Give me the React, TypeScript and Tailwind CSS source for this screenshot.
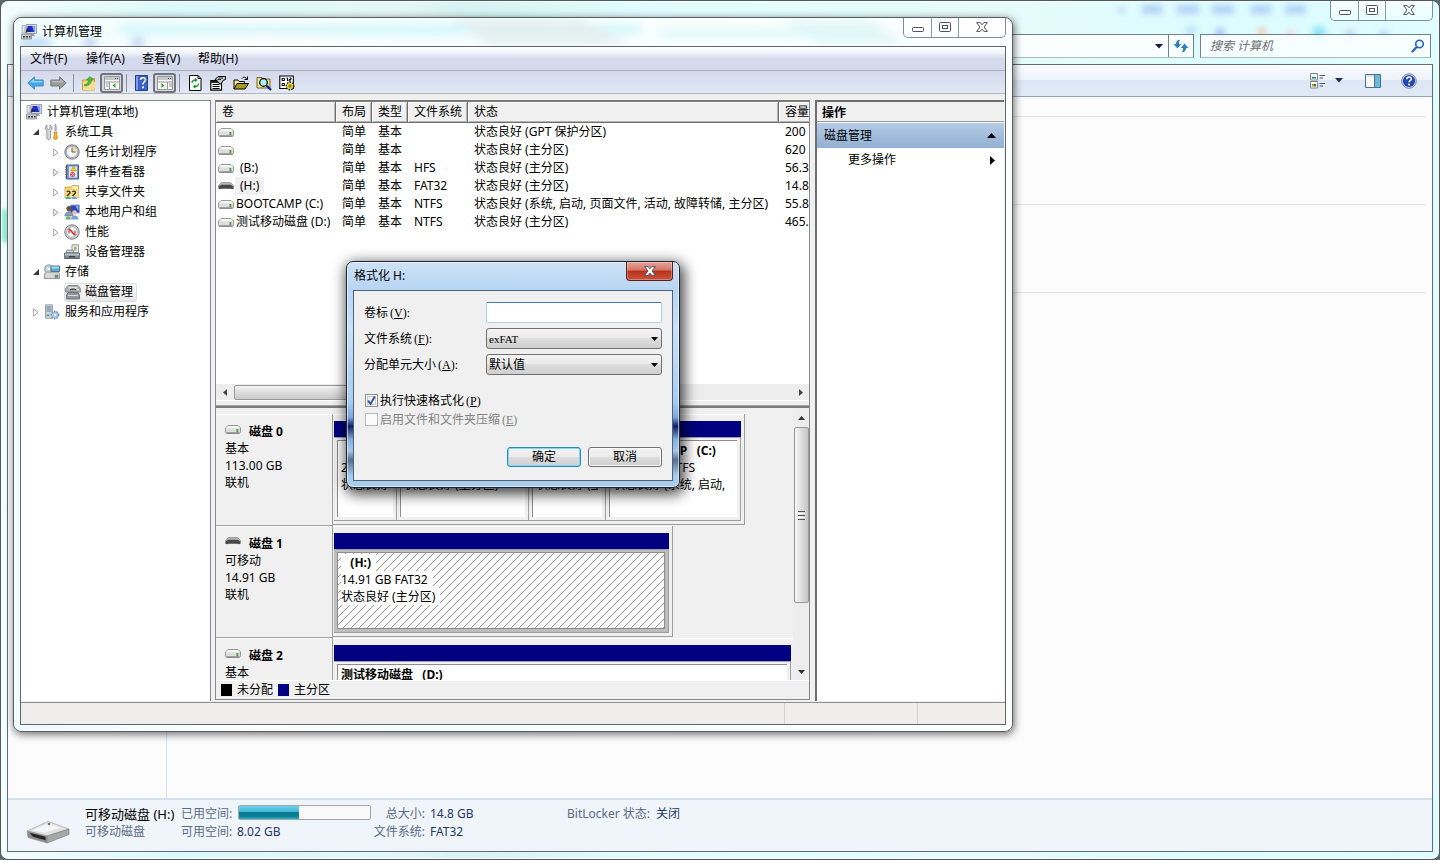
import React from "react";

const UI = "font-['Noto_Sans','Noto_Sans_CJK_SC',sans-serif]";
const SERIF = "font-['Liberation_Serif','Noto_Sans_CJK_SC',serif]";

/* ---------- icons ---------- */

type IconProps = { className?: string };

const Svg = ({ children, className = "size-4", box = "0 0 16 16" }: { children: React.ReactNode; className?: string; box?: string }) => (
  <svg viewBox={box} className={`shrink-0 ${className}`} aria-hidden="true">
    {children}
  </svg>
);

const ComputerIcon = () => (
  <Svg>
    <path d="M5 .5h10.500v9H5z" fill="#d3d6de" stroke="#9aa0b0" />
    <path d="M6.500 2h7.500v6H6.500z" fill="#1c2fc4" />
    <path d="M11 2h3v6h-1z" fill="#7f9cf0" />
    <path d="M8 10h5l1 2H8z" fill="#9a9ea8" />
    <path d="M1 1.500h3V9H1z" fill="#e4e6ea" stroke="#9a9ea6" strokeWidth=".7" />
    <path d="M6 3.500l1.500 2.500 2 1-2.500.5L4.500 9z" fill="#1b2250" />
    <path d="M0.500 10h10v5h-10z" fill="#c6c9ce" stroke="#85888e" strokeWidth=".8" />
    <path d="M2 12h2v1.500H2zM5 12h2v1.500H5zM8 12h1.500v1.500H8z" fill="#3b3e44" />
  </Svg>
);

const ToolsIcon = () => (
  <Svg>
    <path d="M3 1v3.500l1.500 1L6 4.500V1c1.500.8 2 2 2 3.200 0 1.300-.8 2.100-1.600 2.600v7.200c0 2-3.500 2-3.500 0V6.800C2 6.300 1.200 5.500 1.200 4.200 1.200 3 1.800 1.800 3 1z" fill="#d8dade" stroke="#80858d" strokeWidth=".8" />
    <path d="M11 .5l1 .0.4 6h-1.600z" fill="#c3c6cb" stroke="#84888f" strokeWidth=".6" />
    <path d="M9.800 8h3.400l-.7 1.500.9 4.500c0 1.800-3.800 1.800-3.800 0l.9-4.500z" fill="#f3b52a" stroke="#b57c10" strokeWidth=".7" />
  </Svg>
);

const ClockIcon = () => (
  <Svg>
    <circle cx="8" cy="8" r="7.200" fill="#b9bdc4" stroke="#6f747d" strokeWidth=".9" />
    <circle cx="8" cy="8" r="5.600" fill="#f3f6fb" stroke="#8b9099" strokeWidth=".6" />
    <path d="M8 8V2.800a5.200 5.200 0 015.200 5.200z" fill="#f7d9a0" />
    <path d="M8 3.800V8h3.600" fill="none" stroke="#5c626c" strokeWidth="1" />
  </Svg>
);

const EventIcon = () => (
  <Svg>
    <path d="M2.500 1h12v14h-12z" fill="#7f9ad1" stroke="#3d5a9c" />
    <path d="M5 2.500h8v11H5z" fill="#dfe7f7" />
    <path d="M9.500 2l2.800 5H6.700z" fill="#f5c518" stroke="#b58a00" strokeWidth=".5" />
    <circle cx="8.500" cy="10.500" r="2.500" fill="#e0524c" />
    <path d="M7.500 9.500l2 2m0-2l-2 2" stroke="#fff" strokeWidth=".8" />
    <path d="M1 3h3M1 5.500h3M1 8h3M1 10.500h3M1 13h3" stroke="#5c626d" strokeWidth=".9" />
  </Svg>
);

const SharedFolderIcon = () => (
  <Svg>
    <path d="M1 3h6l1-1.500h6.500v12H1z" fill="#f1cf6b" stroke="#c9a54c" strokeWidth=".8" />
    <path d="M8.500 2.500h5V5h-5z" fill="#fdf3cf" />
    <path d="M1.500 5.500h13v8h-13z" fill="#f9de8c" />
    <path d="M3 8c.5-1.200 3-1.200 3 .5S3.500 10.500 3.200 12M8.500 8c.5-1.200 3-1.200 3 .5S9 10.500 8.700 12" fill="none" stroke="#4b3a2a" strokeWidth="1.500" />
    <path d="M1.500 15c.5-3.500 5-3.500 5.500 0z" fill="#42b29c" />
    <path d="M7.500 15c.5-3.500 5-3.500 5.500 0z" fill="#5da9dd" />
  </Svg>
);

const UsersIcon = () => (
  <Svg>
    <path d="M6.500 1h9v8h-9z" fill="#2a49c9" stroke="#a5aab8" />
    <path d="M11.500 2h3v5z" fill="#8fb0f5" />
    <circle cx="5" cy="4.500" r="2.600" fill="#6f5138" />
    <path d="M.8 12c0-6 8.400-6 8.400 0z" fill="#8b9cba" stroke="#56688a" strokeWidth=".5" />
    <circle cx="10.500" cy="8.500" r="2.200" fill="#e8c39c" />
    <path d="M7 15.500c0-5.500 7.500-5.500 7.500 0z" fill="#7b9fd4" />
    <path d="M1.500 15.500c0-4.500 5.500-4.500 5.500 0z" fill="#69b56a" />
  </Svg>
);

const PerfIcon = () => (
  <Svg>
    <circle cx="8" cy="8" r="7.200" fill="#d5d7db" stroke="#6a6d73" strokeWidth=".9" />
    <circle cx="8" cy="8" r="5.300" fill="#fff" stroke="#8e9197" strokeWidth=".7" />
    <path d="M5 4.800l6 6.400" stroke="#d1252b" strokeWidth="1.600" />
    <path d="M5 9.500V5M11 11V6.500" stroke="#d1252b" strokeWidth="1.100" />
  </Svg>
);

const DeviceIcon = () => (
  <Svg>
    <path d="M8 .8h6.500v8H8z" fill="#eef0f2" stroke="#7d8289" strokeWidth=".8" />
    <path d="M10 2.500h2.500v4H10z" fill="#a8b36d" />
    <path d="M3 6h6l1 3H2z" fill="#c7cbd1" stroke="#777c84" strokeWidth=".7" />
    <path d="M.6 9h14.800v5.500H.6z" fill="#7f8b95" stroke="#4b545c" strokeWidth=".8" />
    <path d="M1 9.500h14v2H1z" fill="#b3bec7" />
    <path d="M5 12h6v1.500H5z" fill="#384048" />
  </Svg>
);

const StorageIcon = () => (
  <Svg>
    <circle cx="4.800" cy="5" r="4.200" fill="#c7d2da" stroke="#7a868f" strokeWidth=".8" />
    <circle cx="4.800" cy="5" r="1.300" fill="#f7f9fa" />
    <path d="M7 2h8.500v5.500H7z" fill="#49b2dd" stroke="#55626b" strokeWidth=".9" />
    <path d="M7.500 2.500h7.500v2h-7.500z" fill="#9adcf2" />
    <path d="M.6 9.500l2-1.500h11.500l1.400 1.500v5H.6z" fill="#d6d9dc" stroke="#7c8186" strokeWidth=".8" />
    <path d="M11 11h3v2.500h-3z" fill="#5fb04e" stroke="#666b70" strokeWidth=".5" />
  </Svg>
);

const DiskMgmtIcon = () => (
  <Svg>
    <path d="M3 1.500h10l2.400 3V8H.6V4.500z" fill="#a9adb1" stroke="#7b7f83" strokeWidth=".8" />
    <path d="M4 3h8l1 1.500H3z" fill="#e4e6e8" />
    <path d="M5 6c1-1.200 5-1.200 6 0" stroke="#202224" fill="none" />
    <path d="M3 8.500h10l1.500 2.500V15H1.500v-4z" fill="#92969a" stroke="#606468" strokeWidth=".8" />
    <path d="M3 11h10v1H3z" fill="#d9dbdd" />
    <path d="M12 5h2v1.500h-2z" fill="#cfe3a0" />
  </Svg>
);

const ServicesIcon = () => (
  <Svg>
    <path d="M1.500.8h7v13.500h-7z" fill="#cfd6dd" stroke="#87919b" strokeWidth=".8" />
    <path d="M2.500 3h5M2.500 5h5M2.500 7h5" stroke="#5e7c98" />
    <path d="M2.500 10.500h3v1.500h-3z" fill="#57a05a" />
    <circle cx="11" cy="11" r="3.500" fill="#9dbde0" stroke="#6f94bf" strokeWidth="1.800" strokeDasharray="1.500 1" />
    <circle cx="11" cy="11" r="2.800" fill="#a9c7e8" />
    <circle cx="11" cy="11" r="1.100" fill="#fff" />
  </Svg>
);

const DriveIcon = ({ className = "w-4 h-[9px]" }: IconProps) => (
  <Svg box="0 0 16 9" className={className}>
    <path d="M3 .5h10l2.500 2.500v4l-1 1.500h-13L.5 7V3z" fill="#dedede" stroke="#858585" strokeWidth=".8" />
    <path d="M3.200 1h9.600L15 3.200H1z" fill="#f8f8f8" />
    <path d="M1.500 7.800h13" stroke="#6c6c6c" strokeWidth=".8" />
    <path d="M11.500 4h1.800v3h-1.800z" fill="#4f9a3f" />
  </Svg>
);

const RemovableIcon = ({ className = "w-4 h-[9px]" }: IconProps) => (
  <Svg box="0 0 16 9" className={className}>
    <path d="M3.500 .5h9l3 3v3H.5v-3z" fill="#b4b4b4" stroke="#8a8a8a" strokeWidth=".7" />
    <path d="M.8 4.200l2.700-1.400h9l2.700 1.400v2.600l-1.500.4-1.200-.7h-9l-1.200.7-1.500-.4z" fill="#484848" />
  </Svg>
);

const ArrowIcon = ({ back }: { back?: boolean }) => (
  <Svg box="0 0 17 14" className="h-[14px] w-[17px]">
    {back ? (
      <path d="M.8 7L7.500.8V4h8.700v6H7.500v3.200z" fill="#3fa9ea" stroke="#4a8fc0" />
    ) : (
      <path d="M16.200 7L9.500.8V4H.8v6h8.700v3.200z" fill="#9a9a9a" stroke="#7d7d7d" />
    )}
    {back ? <path d="M3 6.500L7 2.800V5h8v1.500z" fill="#93d6fa" /> : <path d="M2 5h8V2.800l4 3.700H2z" fill="#b9b9b9" />}
  </Svg>
);

const UpFolderIcon = () => (
  <Svg>
    <path d="M1.500 5h5l1-1.500h6V15h-12z" fill="#f0ce74" stroke="#c39c45" />
    <path d="M2 7h12.500l-1 8H2z" fill="#f9df93" />
    <path d="M3.500 9.500c3-.5 4-2 4-4.500H5.500L9 1.500 12.500 5h-2c0 3.500-2.500 6-7 6z" fill="#4fbe3c" stroke="#2d8b22" strokeWidth=".6" />
  </Svg>
);

const PaneIcon = ({ right }: { right?: boolean }) => (
  <Svg>
    <path d="M.5 1.500h15v13H.5z" fill="#f7f7f7" stroke="#9b9b9b" />
    <path d="M1 2h14v3H1z" fill="#c7c7c7" />
    <path d="M11 3.500h1M13 3.500h1" stroke="#555" />
    <path d="M1 7h14" stroke="#9a9a9a" />
    {right ? (
      <path d="M4.500 8v5l3-2.500z" fill="#36a336" />
    ) : (
      <path d="M11.500 8v5l-3-2.500z" fill="#36a336" />
    )}
    <path d={right ? "M10.500 7v7M12 9h3M12 11h3" : "M5.500 7v7M2 9h2.500M2 11h2.500"} stroke="#9a9a9a" />
  </Svg>
);

const HelpBookIcon = () => (
  <Svg>
    <path d="M1.500.5h12v15h-12z" fill="#3a62c8" stroke="#24418f" />
    <path d="M2 1h2v14H2z" fill="#7f9ee6" />
    <path d="M6.500 5c0-3 5-3 5-.2 0 2-2.500 2-2.500 4.700" fill="none" stroke="#fff" strokeWidth="1.500" />
    <circle cx="9" cy="12.300" r="1.100" fill="#fff" />
  </Svg>
);

const RefreshPageIcon = () => (
  <Svg>
    <path d="M2.500.5h8.500l3 3v12H2.500z" fill="#fff" stroke="#000" />
    <path d="M11 .5v3h3" fill="none" stroke="#000" />
    <path d="M5 8c0-2.500 2-3 3.500-3M11.500 8.500c0 2.500-2 3-3.500 3" stroke="#1a9c2d" strokeWidth="1.300" fill="none" />
    <path d="M8 2.800L10.800 5 8 7.200zM8.500 9.300L5.700 11.500l2.800 2.200z" fill="#1a9c2d" />
  </Svg>
);

const PropertiesIcon = () => (
  <Svg>
    <path d="M.8 5.500h10.700v9.700H.8z" fill="#fff" stroke="#000" strokeWidth="1.200" />
    <path d="M1 6h8v2H1z" fill="#222" />
    <path d="M2.500 9.500h7M2.500 11.500h7M2.500 13.500h7" stroke="#000" />
    <path d="M5 4.500L8 1.500h7.500v3L13 5.500 11 9 8.500 8 7 5.500z" fill="#c9c9c9" stroke="#000" />
    <path d="M7.500 4.500H11M8.500 3H13" stroke="#000" strokeWidth=".8" />
  </Svg>
);

const OpenFolderIcon = () => (
  <Svg>
    <path d="M1 14V5h4l1 1.500h5.500V9" fill="#fbf08a" stroke="#000" />
    <path d="M1 14l3-5.500h11.500L12 14z" fill="#a79a1c" stroke="#000" />
    <path d="M9 3.500c1.500-2 3.500-1.500 4.500.5M14.500 1.500v3h-3" fill="none" stroke="#000" />
  </Svg>
);

const SearchDocIcon = () => (
  <Svg>
    <path d="M1 2.500h5L7.500 4H14v9H1z" fill="#f1e68a" stroke="#6d6530" />
    <circle cx="7.500" cy="7.500" r="3.800" fill="#a5f0f3" stroke="#000" strokeWidth="1.200" />
    <path d="M10.500 10.500l4.500 4.500" stroke="#0a1c96" strokeWidth="2.200" />
  </Svg>
);

const SettingsDocIcon = () => (
  <Svg>
    <path d="M.8 1h13.500v12.500H.8z" fill="#fff" stroke="#000" strokeWidth="1.100" />
    <path d="M3 3.500h2.500v2H3zM3 8.500h2.500v2H3z" fill="none" stroke="#000" />
    <path d="M7.500 3h1v3m2-3h1.500v1.500H10V6h2" fill="none" stroke="#000" />
    <circle cx="11" cy="11" r="3.500" fill="#f2e13a" stroke="#000" strokeWidth="1.800" strokeDasharray="1.600 1" />
    <circle cx="11" cy="11" r="3.200" fill="#e8d52c" />
    <circle cx="11" cy="11" r="1.100" fill="#fff" stroke="#000" strokeWidth=".6" />
  </Svg>
);

/* ---------- window frame parts ---------- */

function CaptionButtons({ label }: { label: string }) {
  const base = "flex items-center justify-center border-[#8b9c9f] bg-gradient-to-b from-white/80 to-white/20";
  return (
    <div className="flex h-5 w-[103px] shrink-0 overflow-hidden rounded-b-[5px] border border-t-0 border-[#7f9194]">
      <button type="button" aria-label={`最小化 ${label}`} className={`${base} w-7 border-r`}>
        <Svg box="0 0 12 5" className="mt-1 h-[5px] w-3">
          <rect x=".5" y=".5" width="11" height="4" rx=".8" fill="#fff" stroke="#4b5560" />
        </Svg>
      </button>
      <button type="button" aria-label={`最大化 ${label}`} className={`${base} w-[27px] border-r pb-px`}>
        <Svg box="0 0 12 10" className="h-[10px] w-3">
          <rect x=".5" y=".5" width="11" height="9" rx="1" fill="#fff" stroke="#4b5560" />
          <rect x="3.500" y="3.500" width="5" height="3" fill="#fff" stroke="#4b5560" />
        </Svg>
      </button>
      <button type="button" aria-label={`关闭 ${label}`} className={`${base} flex-1 pb-px`}>
        <CloseGlyph />
      </button>
    </div>
  );
}

function CloseGlyph() {
  return (
    <Svg box="0 0 12 10" className="h-[10px] w-3">
      <path d="M.6.600h3.600L6 2.800 7.800.600h3.600L8 5l3.400 4.400H7.800L6 7.200 4.200 9.400H.6L4 5z" fill="#fff" stroke="#4b5560" strokeWidth="1" />
    </Svg>
  );
}

const Caret = ({ d, box = "0 0 8 8", className = "size-2", fill = "#000" }: { d: string; box?: string; className?: string; fill?: string }) => (
  <Svg box={box} className={className}>
    <path d={d} fill={fill} />
  </Svg>
);

/* ---------- explorer window ---------- */

function Explorer() {
  return (
    <section className="relative flex min-h-screen flex-col rounded-lg border border-[#4d5a5e] bg-[linear-gradient(90deg,#f3fefe_0%,#dcf9fb_12%,#e4f7f8_28%,#d6f2f2_32%,#e2fdff_45%,#e6fbfc_70%,#ddfcff_85%,#e0fdff_100%)] px-[6px] pb-[7px] shadow-[inset_0_0_0_1px_rgba(255,255,255,0.8)]">
      <svg className="absolute top-[200px] left-0 h-[50px] w-[6px]" viewBox="0 0 6 50" aria-hidden="true">
        <rect x="2" y="8" width="4" height="34" rx="2" fill="#5fe0b4" className="blur-[2px]" />
      </svg>
      <header className="relative flex h-[33px] items-start justify-end">
        <svg className="absolute top-0 right-0 h-[44px] w-[330px] blur-[3px]" viewBox="0 0 330 44" aria-hidden="true">
          <g fill="#a3c4f2" opacity=".75">
            <rect x="39" y="4" width="20" height="9" />
            <rect x="74" y="4" width="22" height="9" />
            <rect x="109" y="4" width="22" height="9" />
            <rect x="148" y="4" width="20" height="9" />
            <rect x="182" y="4" width="21" height="9" />
            <circle cx="19" cy="9" r="3" />
          </g>
          <circle cx="88" cy="30" r="5" fill="#b5e2f6" />
          <circle cx="117" cy="32" r="5" fill="#a9bcf0" />
          <circle cx="159" cy="31" r="4" fill="#f3c49c" />
          <circle cx="188" cy="34" r="5" fill="#f3d8e0" />
          <circle cx="216" cy="32" r="7" fill="#8fe2f7" />
          <circle cx="247" cy="33" r="5" fill="#c4d5f5" />
          <circle cx="281" cy="33" r="4" fill="#afcef3" />
        </svg>
        <div className="relative">
          <CaptionButtons label="资源管理器" />
        </div>
      </header>

      <div className="relative mr-[2px] ml-[90px] flex gap-[6px]">
        <div className="flex h-6 flex-1 items-center border border-[#6f8285] border-b-[#a9bcbe] bg-white/80">
          <button type="button" aria-label="展开地址栏" className="ml-auto flex h-full w-5 items-center justify-center border-r border-[#6f8285]">
            <Caret d="M0 0h8L4 4.500z" box="0 0 8 5" className="h-[5px] w-2" fill="#111a4f" />
          </button>
          <button type="button" aria-label="刷新" className="flex h-full w-6 items-center justify-center">
            <Svg box="0 0 16 14" className="h-[14px] w-4">
              <path d="M4.500 9.500L.5 5h2.400C3 2 5 .5 7.500.8 6 1.800 6 3 6 5h2.300zM11.500 4.500l4 4.500h-2.400c-.1 3-2.100 4.500-4.600 4.200C10 12.200 10 11 10 9H7.700z" fill="#2f7fc6" />
            </Svg>
          </button>
        </div>
        <label className="flex h-6 w-[231px] items-center border border-[#6f8285] border-b-[#a9bcbe] bg-white/75 pr-[5px] pl-[9px]">
          <input
            type="search"
            aria-label="搜索 计算机"
            placeholder="搜索 计算机"
            className="w-full min-w-0 flex-1 bg-transparent text-[12px] italic outline-none placeholder:text-[#6d6d6d]"
          />
          <Svg box="0 0 14 14" className="size-[14px]">
            <circle cx="8.500" cy="5" r="3.800" fill="#e8f4ff" stroke="#2a62bd" strokeWidth="1.600" />
            <path d="M5.700 8L1.500 12.500" stroke="#2a62bd" strokeWidth="2.200" strokeLinecap="round" />
          </Svg>
        </label>
      </div>

      <div className="relative mt-[6px] flex flex-1 flex-col border border-[#5f6c78] bg-[#fcfcfc]">
        <nav aria-label="工具栏" className="flex h-8 items-center justify-end border-b border-[#93a3ba] bg-[linear-gradient(#fbfdff,#ecf2fb_48%,#dde6f4_50%,#e0e9f6)] pr-[13px]">
          <button type="button" aria-label="更改视图" className="flex h-5 w-[33px] items-center justify-between">
            <Svg>
              <path d="M.5.500h7v6.500h-7zM.5 8.500h7V15h-7z" fill="#fff" stroke="#7b8796" />
              <path d="M2 4h4v1.500H2z" fill="#157d86" />
              <path d="M2 11h2v2.500H2z" fill="#c8940e" />
              <path d="M4 11h2v2.500H4z" fill="#3e7f2a" />
              <path d="M9.500 2.500H15M9.500 5H13M9.500 10.500H15M9.500 13H13" stroke="#4b5a6c" />
            </Svg>
            <Caret d="M0 0h8L4 4.500z" box="0 0 8 5" className="h-[5px] w-2" fill="#1e3056" />
          </button>
          <button type="button" aria-label="显示预览窗格" className="ml-5 flex size-5 items-center justify-center">
            <Svg>
              <path d="M.5 1.500h15v13H.5z" fill="#fff" stroke="#4d6f90" />
              <path d="M1 2h14v2H1z" fill="#d7e5f1" />
              <path d="M10 2h5v12h-5z" fill="#6db9d8" />
              <path d="M9.500 2v12" stroke="#4d6f90" />
            </Svg>
          </button>
          <button type="button" aria-label="获取帮助" className="ml-4 flex size-5 items-center justify-center">
            <Svg>
              <circle cx="8" cy="8" r="7.300" fill="#d5daea" stroke="#7c85a3" />
              <circle cx="8" cy="8" r="6.100" fill="#2347b5" />
              <path d="M5.800 6.300c0-3 4.500-3 4.500-.4C10.300 7.500 8 7.500 8 9.300" fill="none" stroke="#fff" strokeWidth="1.500" />
              <circle cx="8" cy="11.500" r="1" fill="#fff" />
            </Svg>
          </button>
        </nav>

        <div className="flex flex-1">
          <div className="w-[159px] border-r border-[#d6e2f1]" />
          <div className="flex flex-1 flex-col pt-[19px] pr-[7px]">
            <hr className="border-[#e0e0e0]" />
            <hr className="mt-[87px] border-[#e0e0e0]" />
            <hr className="mt-[87px] border-[#e0e0e0]" />
          </div>
        </div>

        <footer className="flex h-[53px] border-t-2 border-[#d5e0ee] bg-[#f0f4fb] pt-[5px] pl-[18px] text-[12px] leading-[18px] text-[#22396b]">
          <Svg box="0 0 44 24" className="mt-[15px] h-6 w-11">
            <path d="M1 11L22 1.500 43 9 21 16z" fill="#e2e2e2" stroke="#9b9b9b" strokeWidth=".6" />
            <path d="M1 11L21 16v7L2 17.500z" fill="#8a8a8a" stroke="#9c9c9c" strokeWidth=".8" />
            <path d="M3.500 12.800l16 4v3.500L7 16.800z" fill="#262626" />
            <path d="M21 16L43 9v5.500L21 23z" fill="#a7a7a7" stroke="#777" strokeWidth=".6" />
            <path d="M6 10.500L22 3.500l12 4-15 5z" fill="#f6f6f6" />
            <circle cx="23" cy="4" r="1.300" fill="#777" />
          </Svg>
          <div className="ml-[15px] w-24">
            <p className="text-[13px] whitespace-nowrap text-black">可移动磁盘 (H:)</p>
            <p className="text-[#5a6b85]">可移动磁盘</p>
          </div>
          <dl className="grid w-[190px] grid-cols-[56px_134px] content-start">
            <dt className="text-[#5a6b85]">已用空间:</dt>
            <dd className="flex items-start">
              <div role="meter" aria-label="已用空间" aria-valuenow={46} className="ml-px h-[15px] w-[133px] rounded-[2px] border border-[#a5a5a5] bg-[#fafafa]">
                <div className="h-full w-[46%] bg-[linear-gradient(#6fd3ec,#3fb6d6_45%,#087b95_50%,#0b7f98_80%,#2eb4cd)]" />
              </div>
            </dd>
            <dt className="text-[#5a6b85]">可用空间:</dt>
            <dd>8.02 GB</dd>
          </dl>
          <dl className="grid w-[196px] grid-cols-[54px_1fr] content-start gap-x-[5px]">
            <dt className="text-right whitespace-nowrap text-[#5a6b85]">总大小:</dt>
            <dd>14.8 GB</dd>
            <dt className="text-right whitespace-nowrap text-[#5a6b85]">文件系统:</dt>
            <dd>FAT32</dd>
          </dl>
          <dl className="flex gap-[6px]">
            <dt className="text-[#5a6b85]">BitLocker 状态:</dt>
            <dd>关闭</dd>
          </dl>
        </footer>
      </div>
    </section>
  );
}

/* ---------- management console ---------- */

type Node = { label: string; icon: React.ReactNode; depth: 0 | 1 | 2; state?: "open" | "closed"; selected?: boolean };

const tree: Node[] = [
  { label: "计算机管理(本地)", icon: <ComputerIcon />, depth: 0 },
  { label: "系统工具", icon: <ToolsIcon />, depth: 1, state: "open" },
  { label: "任务计划程序", icon: <ClockIcon />, depth: 2, state: "closed" },
  { label: "事件查看器", icon: <EventIcon />, depth: 2, state: "closed" },
  { label: "共享文件夹", icon: <SharedFolderIcon />, depth: 2, state: "closed" },
  { label: "本地用户和组", icon: <UsersIcon />, depth: 2, state: "closed" },
  { label: "性能", icon: <PerfIcon />, depth: 2, state: "closed" },
  { label: "设备管理器", icon: <DeviceIcon />, depth: 2 },
  { label: "存储", icon: <StorageIcon />, depth: 1, state: "open" },
  { label: "磁盘管理", icon: <DiskMgmtIcon />, depth: 2, selected: true },
  { label: "服务和应用程序", icon: <ServicesIcon />, depth: 1, state: "closed" },
];

const indent = { 0: "pl-[5px]", 1: "pl-[10px]", 2: "pl-[30px]" };

function Tree() {
  return (
    <ul role="tree" className="w-[190px] shrink-0 border-t border-r border-[#828790] bg-white pt-px">
      {tree.map((n) => (
        <li key={n.label} role="treeitem" aria-selected={!!n.selected} className={`flex h-5 items-center ${indent[n.depth]}`}>
          {n.depth > 0 && (
            <span className="flex w-[13px] shrink-0 items-center justify-start pl-[2px]">
              {n.state === "open" && <Caret d="M6 0v6H0z" box="0 0 6 6" className="size-[6px]" fill="#3a3a3a" />}
              {n.state === "closed" && (
                <Svg box="0 0 6 9" className="h-[9px] w-[6px]">
                  <path d="M.7 1v7L5 4.500z" fill="#fff" stroke="#9a9a9a" strokeWidth=".9" />
                </Svg>
              )}
            </span>
          )}
          <span className={n.selected ? "flex h-[19px] items-center gap-1 rounded-[3px] border border-[#dcdcdc] bg-gradient-to-b from-[#f9f9f9] to-[#e8e8e8] pr-[3px]" : "flex items-center gap-[5px]"}>
            {n.icon}
            {n.label}
          </span>
        </li>
      ))}
    </ul>
  );
}

const volumes = [
  { name: "", fs: "", status: "状态良好 (GPT 保护分区)", size: "200" },
  { name: "", fs: "", status: "状态良好 (主分区)", size: "620" },
  { name: "(B:)", fs: "HFS", status: "状态良好 (主分区)", size: "56.31" },
  { name: "(H:)", fs: "FAT32", status: "状态良好 (主分区)", size: "14.89", removable: true },
  { name: "BOOTCAMP (C:)", fs: "NTFS", status: "状态良好 (系统, 启动, 页面文件, 活动, 故障转储, 主分区)", size: "55.88" },
  { name: "测试移动磁盘 (D:)", fs: "NTFS", status: "状态良好 (主分区)", size: "465.7" },
];

function VolumeTable() {
  const th = "h-[21px] border-r border-b border-[#6e6e6e] bg-[#f0f0f0] pl-[6px] text-left font-normal shadow-[inset_1px_1px_0_#fff,inset_-1px_-1px_0_#b5b5b5]";
  return (
    <div className="flex-1 overflow-hidden bg-white">
      <table className="w-[660px] table-fixed border-separate border-spacing-0 whitespace-nowrap">
        <colgroup>
          <col className="w-[120px]" />
          <col className="w-9" />
          <col className="w-9" />
          <col className="w-[60px]" />
          <col className="w-[311px]" />
          <col />
        </colgroup>
        <thead>
          <tr>
            {["卷", "布局", "类型", "文件系统", "状态", "容量"].map((h) => (
              <th key={h} scope="col" className={th}>{h}</th>
            ))}
          </tr>
        </thead>
        <tbody className="leading-[18px]">
          {volumes.map((v, i) => (
            <tr key={i}>
              <td className="h-[18px] pl-[2px]">
                <span className="flex items-center gap-px">
                  {v.removable ? <RemovableIcon /> : <DriveIcon />}
                  <span className={v.name.length === 4 ? (v.removable ? "bg-[#f0f0f0] px-[5px]" : "px-[5px]") : "pl-px"}>{v.name}</span>
                </span>
              </td>
              <td className="pl-[6px]">简单</td>
              <td className="pl-[6px]">基本</td>
              <td className="pl-[6px]">{v.fs}</td>
              <td className="pl-[6px]">{v.status}</td>
              <td className="pl-[6px]">{v.size}</td>
            </tr>
          ))}
        </tbody>
      </table>
    </div>
  );
}

type Part = { width: string; title: string; info: string; status: string; hatched?: boolean };

function Partition({ part }: { part: Part }) {
  return (
    <div className={`flex shrink-0 flex-col ${part.width}`}>
      <div className="h-4 bg-[#000080]" />
      <div className={`flex flex-1 border-t border-r border-b border-[#9d9da8] p-[3px] pt-[2px] ${part.hatched ? "bg-[#bdbdbd]" : "bg-[#f0f0f0]"}`}>
        <div className={`relative min-w-0 flex-1 border-t border-l border-[#8c8c8c] bg-white pt-px pr-1 pl-[3px] leading-[17px] whitespace-nowrap ${part.hatched ? "border-r border-b" : ""}`}>
          {part.hatched && (
            <svg className="absolute inset-0 size-full" aria-hidden="true">
              <pattern id="hatch" width="8" height="8" patternUnits="userSpaceOnUse">
                <path d="M-1 9L9-1" stroke="#8f8f8f" strokeWidth=".9" />
              </pattern>
              <rect width="100%" height="100%" fill="url(#hatch)" />
            </svg>
          )}
          <div className="relative overflow-hidden">
            <p className="font-bold"><span className="bg-white pr-[5px] whitespace-pre">{part.title || " "}</span></p>
            <p><span className="bg-white pr-[5px]">{part.info}</span></p>
            <p><span className="bg-white pr-[5px]">{part.status}</span></p>
          </div>
        </div>
      </div>
    </div>
  );
}

const disks: { name: string; kind: string; size: string; removable?: boolean; parts: Part[] }[] = [
  {
    name: "磁盘 0",
    kind: "基本",
    size: "113.00 GB",
    parts: [
      { width: "w-[63px]", title: "", info: "200 MB", status: "状态良好" },
      { width: "w-[132px]", title: "", info: "56.31 GB HFS", status: "状态良好 (主分区)" },
      { width: "w-[77px]", title: "", info: "620 MB", status: "状态良好 (主" },
      { width: "w-[135px]", title: "  BOOTCAMP   (C:)", info: "55.88 GB NTFS", status: "状态良好 (系统, 启动," },
    ],
  },
  {
    name: "磁盘 1",
    kind: "可移动",
    size: "14.91 GB",
    removable: true,
    parts: [{ width: "w-[335px]", title: "   (H:)", info: "14.91 GB FAT32", status: "状态良好 (主分区)", hatched: true }],
  },
  {
    name: "磁盘 2",
    kind: "基本",
    size: "465.76 GB",
    parts: [{ width: "w-[457px]", title: "测试移动磁盘   (D:)", info: "465.76 GB NTFS", status: "状态良好 (主分区)" }],
  },
];

function DiskMap() {
  return (
    <div className="min-h-0 flex-1 overflow-hidden pt-[6px]">
      {disks.map((d) => (
        <div key={d.name} className="flex h-28">
          <div className="w-[117px] shrink-0 border-r border-b border-[#9d9d9d] pt-[9px] pl-[9px] leading-[17px] shadow-[inset_0_1px_0_#fff]">
            <p className="flex items-center gap-2 font-bold">
              {d.removable ? <RemovableIcon className="mb-1 h-[9px] w-4" /> : <DriveIcon className="mb-1 h-[9px] w-4" />}
              {d.name}
            </p>
            <p>{d.kind}</p>
            <p>{d.size}</p>
            <p>联机</p>
          </div>
          <div className="flex h-[111px] border-r border-b border-[#9d9d9d] pt-[7px] pr-[3px] pb-[3px] pl-px shadow-[inset_0_1px_0_#fff]">
            {d.parts.map((p, i) => (
              <Partition key={i} part={p} />
            ))}
          </div>
        </div>
      ))}
    </div>
  );
}

function HorizontalScroll() {
  return (
    <div className="flex h-[17px] items-center border-b border-white bg-[#ededed]">
      <button type="button" aria-label="向左滚动" className="flex w-[18px] justify-center">
        <Caret d="M4 0v7L0 3.500z" box="0 0 4 7" className="h-[7px] w-1" fill="#444" />
      </button>
      <div className="h-[15px] w-[420px] rounded-[2px] border border-[#9a9a9a] bg-gradient-to-b from-[#f4f4f4] via-[#dcdcdc] to-[#c9c9c9]" />
      <button type="button" aria-label="向右滚动" className="ml-auto flex w-4 justify-center">
        <Caret d="M0 0v7l4-3.500z" box="0 0 4 7" className="h-[7px] w-1" fill="#444" />
      </button>
    </div>
  );
}

function VerticalScroll() {
  return (
    <div className="flex w-4 shrink-0 flex-col items-center bg-[#ededed]">
      <button type="button" aria-label="向上滚动" className="flex h-[19px] items-center justify-center">
        <Caret d="M0 4h7L3.500 0z" box="0 0 7 4" className="h-1 w-[7px]" fill="#333" />
      </button>
      <div className="flex h-[176px] w-[15px] flex-col items-center justify-center gap-px rounded-[2px] border border-[#9a9a9a] bg-gradient-to-r from-[#f6f6f6] via-[#dedede] to-[#c6c6c6]">
        <i className="h-px w-[7px] bg-[#555]" />
        <i className="h-px w-[7px] bg-white" />
        <i className="h-px w-[7px] bg-[#555]" />
        <i className="h-px w-[7px] bg-white" />
        <i className="h-px w-[7px] bg-[#555]" />
      </div>
      <button type="button" aria-label="向下滚动" className="mt-auto flex h-4 items-center justify-center">
        <Caret d="M0 0h7L3.500 4z" box="0 0 7 4" className="h-1 w-[7px]" fill="#333" />
      </button>
    </div>
  );
}

const toolbar: ({ label: string; icon: React.ReactNode; pressed?: boolean } | null)[] = [
  { label: "后退", icon: <ArrowIcon back /> },
  { label: "前进", icon: <ArrowIcon /> },
  null,
  { label: "上一级", icon: <UpFolderIcon /> },
  { label: "显示/隐藏控制台树", icon: <PaneIcon />, pressed: true },
  null,
  { label: "帮助", icon: <HelpBookIcon /> },
  { label: "显示/隐藏操作窗格", icon: <PaneIcon right />, pressed: true },
  null,
  { label: "刷新", icon: <RefreshPageIcon /> },
  { label: "属性", icon: <PropertiesIcon /> },
  { label: "打开", icon: <OpenFolderIcon /> },
  { label: "查找", icon: <SearchDocIcon /> },
  { label: "设置", icon: <SettingsDocIcon /> },
];

function Console() {
  return (
    <section className="absolute top-[17px] right-[427px] bottom-32 left-[13px] flex flex-col rounded-lg border border-[#55605f] bg-[linear-gradient(90deg,#effdfd,#fdfefe_25%,#f6fefe_40%,#fdffff)] px-[6px] pb-[6px] shadow-[inset_0_0_0_1px_rgba(255,255,255,0.9),1px_2px_9px_rgba(0,0,0,0.6)]">
      <header className="relative flex h-7 items-start justify-between overflow-hidden">
        <svg className="absolute inset-0 size-full blur-[5px]" viewBox="0 0 986 28" preserveAspectRatio="none" aria-hidden="true">
          <rect x="100" y="7" width="520" height="9" fill="#b9f2f8" opacity=".6" />
          <path d="M430 0h130l50 28h-140z" fill="#e3eeed" opacity=".8" />
          <path d="M760 0h90l40 28h-90z" fill="#e8f8f8" />
          <rect x="0" y="22" width="30" height="8" fill="#9fc6f3" />
          <circle cx="70" cy="26" r="5" fill="#8fa9e0" />
          <circle cx="118" cy="26" r="5" fill="#8fb0ea" />
          <rect x="640" y="12" width="220" height="6" fill="#d6f6f9" />
        </svg>
        <h1 className="relative flex h-full items-center gap-[5px] pl-px">
          <ComputerIcon />
          计算机管理
        </h1>
        <div className="relative">
          <CaptionButtons label="计算机管理" />
        </div>
      </header>

      <div className="relative flex min-h-0 flex-1 flex-col border border-[#5e6668] bg-[#f0f0f0]">
        <nav aria-label="菜单" className="flex h-6 items-center border-b border-[#a9adb8] bg-[linear-gradient(#fff,#f1f3fa_25%,#d6daed_50%,#d3d8ec)] pl-px">
          {["文件(F)", "操作(A)", "查看(V)", "帮助(H)"].map((m) => (
            <button key={m} type="button" className="w-14 pl-2 text-left whitespace-nowrap">{m}</button>
          ))}
        </nav>
        <div role="toolbar" aria-label="标准工具栏" className="flex h-[23px] items-center border-b border-[#b4b8c4] bg-[linear-gradient(#d3d8ec,#e3e8f5)] pt-px pl-[3px]">
          {toolbar.map((t, i) =>
            t ? (
              <button
                key={t.label}
                type="button"
                aria-label={t.label}
                className={`flex h-5 w-[23px] items-center justify-center ${t.pressed ? "rounded-[3px] border-2 border-[#70747e] bg-[#d5d8df]" : ""}`}
              >
                {t.icon}
              </button>
            ) : (
              <span key={i} className="mx-[3px] h-[18px] w-px bg-[#8d919c]" />
            )
          )}
        </div>

        <div className="flex min-h-0 flex-1 gap-1 pt-[6px]">
          <Tree />

          <main className="mb-px flex min-w-0 flex-1 flex-col border-x border-b border-[#8a8a8a] border-t-2 border-t-[#7b7b7b]">
            <VolumeTable />
            <HorizontalScroll />
            <div className="h-[7px] border-b-2 border-[#7b7b7b] pt-1">
              <div className="h-px bg-[#a5a5a5]" />
            </div>
            <div className="flex h-[272px] shrink-0">
              <DiskMap />
              <VerticalScroll />
            </div>
            <div className="flex h-[19px] shrink-0 items-center border-t border-white pl-[5px]">
              <span className="mr-[5px] h-3 w-[11px] bg-black" />
              <span>未分配</span>
              <span className="mr-[5px] ml-[5px] h-3 w-[11px] bg-[#000080]" />
              <span>主分区</span>
            </div>
          </main>

          <aside className="mr-px ml-[1px] w-[189px] shrink-0 border-t-2 border-l-2 border-[#6e6e6e] bg-white">
            <h2 className="flex h-5 items-center border-b border-[#9a9a9a] bg-[#f0f0f0] pt-[2px] pl-[5px] font-bold">操作</h2>
            <div className="mt-px flex h-[25px] items-center justify-between bg-gradient-to-b from-[#b4cbe4] to-[#93b0d3] pr-2 pl-[7px]">
              磁盘管理
              <Caret d="M0 5h9L4.500 0z" box="0 0 9 5" className="h-[5px] w-[9px]" />
            </div>
            <button type="button" className="flex h-6 w-full items-center justify-between pr-[9px] pl-[31px]">
              更多操作
              <Caret d="M0 0v9l5-4.500z" box="0 0 5 9" className="h-[9px] w-[5px]" />
            </button>
          </aside>
        </div>

        <footer className="mt-px flex h-[22px] shrink-0 border-t border-[#8f8f8f] bg-[#f0eded] pr-[87px]">
          <span className="flex-1" />
          <span className="w-[134px] border-x border-[#d6d2d2]" />
        </footer>
      </div>
    </section>
  );
}

/* ---------- format dialog ---------- */

function Mnemonic({ k, colon }: { k: string; colon?: boolean }) {
  return (
    <span className={`${SERIF} ml-[2px] text-[12px]`}>
      (<u>{k}</u>){colon && ":"}
    </span>
  );
}

function DialogSelect({ id, value, serif }: { id: string; value: string; serif?: boolean }) {
  return (
    <div className="relative">
      <select
        id={id}
        className={`block h-[21px] w-full appearance-none rounded-[3px] border border-[#707070] bg-[linear-gradient(#f3f3f3,#ebebeb_48%,#dddddd_50%,#cfcfcf)] pl-[2px] outline-none ${serif ? `${SERIF} text-[11px]` : ""}`}
      >
        <option>{value}</option>
      </select>
      <svg viewBox="0 0 7 4" className="pointer-events-none absolute top-[9px] right-1 h-1 w-[7px]" aria-hidden="true">
        <path d="M0 0h7L3.500 4z" fill="#000" />
      </svg>
    </div>
  );
}

function FormatDialog() {
  const button = "flex h-5 w-[74px] items-center justify-center rounded-[3px] border bg-[linear-gradient(#f3f3f3,#ebebeb_48%,#dddddd_50%,#cfcfcf)]";
  return (
    <section
      role="dialog"
      aria-label="格式化 H:"
      className="absolute top-[261px] left-[346px] w-[334px] rounded-[7px] border border-[#1c2733] bg-[linear-gradient(#cfe2f6,#b7d5f4_12%,#c9e1f8_30%,#a9cdf2_62%,#7fa6dc_69%,#101c66_73%,#86b0df_79%,#a4c6ea_84%,#54708f_88%,#a9cdee_95%)] px-[6px] pb-[6px] shadow-[inset_0_0_0_1px_rgba(255,255,255,0.55),2px_4px_14px_2px_rgba(0,0,0,0.75)]"
    >
      <header className="flex h-7 items-start justify-between">
        <h2 className="flex h-full items-center pl-px">格式化 H:</h2>
        <button
          type="button"
          aria-label="关闭"
          className="flex h-[19px] w-[47px] items-center justify-center rounded-b-[4px] border border-t-0 border-[#5a1d18] bg-[linear-gradient(#e5a49a,#d47567_45%,#b8301b_50%,#c9543f)] shadow-[inset_0_0_0_1px_rgba(255,255,255,0.3)]"
        >
          <CloseGlyph />
        </button>
      </header>
      <form className="border border-[#4e6277] bg-[#f0f0f0] px-[10px] pt-[11px] pb-[13px]" onSubmit={(e) => e.preventDefault()}>
        <div className="grid grid-cols-[122px_1fr] items-center gap-y-[5px]">
          <label htmlFor="volume" className="leading-5">卷标<Mnemonic k="V" colon /></label>
          <input id="volume" type="text" className="block h-[21px] w-full rounded-[2px] border border-[#b5cfe7] border-t-[#3d7bad] bg-white px-1 outline-none" />
          <label htmlFor="fs" className="leading-5">文件系统<Mnemonic k="F" colon /></label>
          <DialogSelect id="fs" value="exFAT" serif />
          <label htmlFor="unit" className="leading-5">分配单元大小<Mnemonic k="A" colon /></label>
          <DialogSelect id="unit" value="默认值" />
        </div>
        <div className="mt-4 flex flex-col pl-px">
          <label className="flex h-[19px] items-center gap-[2px]">
            <span className="relative flex size-[13px]">
              <input type="checkbox" defaultChecked className="peer size-[13px] appearance-none border border-[#8e8f8f] bg-[#f4f4f4] shadow-[inset_0_0_0_1px_#fff,inset_0_0_0_2px_#c5cbd3]" />
              <svg viewBox="0 0 13 13" className="pointer-events-none absolute inset-0 hidden peer-checked:block" aria-hidden="true">
                <path d="M3 6.500l2.500 3.500L9.800 2.500" fill="none" stroke="#3a539c" strokeWidth="2" />
              </svg>
            </span>
            <span>执行快速格式化<Mnemonic k="P" /></span>
          </label>
          <label className="flex h-[19px] items-center gap-[2px] text-[#838383]">
            <input type="checkbox" disabled className="size-[13px] appearance-none border border-[#b9b9b9] bg-[#fbfbfb]" />
            <span>启用文件和文件夹压缩<Mnemonic k="E" /></span>
          </label>
        </div>
        <div className="mt-[18px] flex justify-end gap-[7px]">
          <button type="submit" className={`${button} border-[#2c8cb8] shadow-[inset_0_0_0_1px_#7fd6f5]`}>确定</button>
          <button type="button" className={`${button} border-[#707070] shadow-[inset_0_0_0_1px_#fbfbfb]`}>取消</button>
        </div>
      </form>
    </section>
  );
}

export default function App() {
  return (
    <div className={`relative min-h-screen overflow-hidden bg-[#5b6a70] text-[12px] leading-4 text-black ${UI}`}>
      <Explorer />
      <Console />
      <FormatDialog />
    </div>
  );
}
